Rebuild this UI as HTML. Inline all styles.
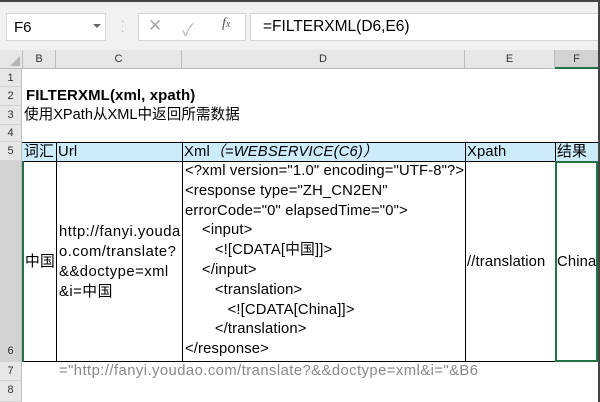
<!DOCTYPE html>
<html><head><meta charset="utf-8"><style>
*{margin:0;padding:0;box-sizing:border-box}
body{width:600px;height:402px;overflow:hidden;background:#fff;position:relative;font-family:"Liberation Sans","Noto Sans CJK SC",sans-serif;color:#000}
.a{position:absolute;white-space:nowrap}
.hd{background:#e6e6e6;color:#333;font-size:11px;text-align:center}
.rh{position:absolute;left:0;width:22px;background:#e6e6e6;color:#333;font-size:11px;text-align:center;border-bottom:1px solid #d4d4d4;border-right:1px solid #bdbdbd}
.t{font-size:14.8px;letter-spacing:0.15px;line-height:20px}
</style></head><body>
<div class="a" style="left:0;top:0;width:600px;height:50px;background:#f0f0f0;border-top:2px solid #444"></div>
<div class="a" style="left:6px;top:13px;width:100px;height:28px;background:#fff;border:1px solid #d6d6d6;font-size:15px;padding:5px 0 0 7px">F6</div>
<div class="a" style="left:93px;top:24px;width:0;height:0;border-left:4px solid transparent;border-right:4px solid transparent;border-top:4px solid #666"></div>
<div class="a" style="left:121px;top:19px;color:#aaa;font-size:10px;line-height:5px">·<br>·<br>·</div>
<div class="a" style="left:138px;top:13px;width:108px;height:28px;background:#fff;border:1px solid #d6d6d6"></div>
<div class="a" style="left:148px;top:16px;color:#aaa;font-size:17px">✕</div>
<div class="a" style="left:182px;top:16px;color:#bbb;font-size:17px">✓</div>
<div class="a" style="left:222px;top:16px;color:#555;font-size:14px;font-style:italic;font-family:'Liberation Serif',serif">f<span style="font-size:10px">x</span></div>
<div class="a" style="left:250px;top:13px;width:352px;height:28px;background:#fff;border:1px solid #d6d6d6;font-size:15.5px;padding:4px 0 0 12px">=FILTERXML(D6,E6)</div>
<div class="a hd" style="left:0;top:50px;width:600px;height:19px;border-bottom:1px solid #bdbdbd"></div>
<div class="a" style="left:10px;top:56px;width:0;height:0;border-left:10px solid transparent;border-bottom:10px solid #b5b5b5"></div>
<div class="a hd" style="left:22px;top:50px;width:34px;height:18px;line-height:18px;border-left:1px solid #bdbdbd;border-right:1px solid #bdbdbd">B</div>
<div class="a hd" style="left:56px;top:50px;width:126px;height:18px;line-height:18px;border-right:1px solid #bdbdbd">C</div>
<div class="a hd" style="left:182px;top:50px;width:283px;height:18px;line-height:18px;border-right:1px solid #bdbdbd">D</div>
<div class="a hd" style="left:465px;top:50px;width:90px;height:18px;line-height:18px;border-right:1px solid #bdbdbd">E</div>
<div class="a hd" style="left:555px;top:50px;width:43px;height:19px;line-height:18px;background:#d2d2d2;border-bottom:2px solid #217346">F</div>
<div class="a" style="left:598px;top:0;width:2px;height:402px;background:#444"></div>
<div class="rh" style="top:69px;height:18px;line-height:18px">1</div>
<div class="rh" style="top:87px;height:19px;line-height:19px">2</div>
<div class="rh" style="top:106px;height:19px;line-height:19px">3</div>
<div class="rh" style="top:125px;height:17px;line-height:17px">4</div>
<div class="rh" style="top:142px;height:19px;line-height:19px">5</div>
<div class="rh" style="top:161px;height:201px;background:#d2d2d2;padding-top:184px">6</div>
<div class="rh" style="top:362px;height:19px;line-height:19px">7</div>
<div class="rh" style="top:381px;height:21px;line-height:19px">8</div>
<div class="a" style="left:26px;top:86px;font-size:15px;line-height:20px;font-weight:bold;letter-spacing:0.1px">FILTERXML(xml, xpath)</div>
<div class="a" style="left:24px;top:105px;font-size:14.6px;line-height:20px">使用XPath从XML中返回所需数据</div>
<div class="a" style="left:22px;top:142px;width:576px;height:20px;background:#ccecfb;border-top:1px solid #000;border-bottom:1px solid #000"></div>
<div class="a" style="left:22px;top:142px;width:576px;height:220px;border-bottom:1px solid #000"></div>
<div class="a" style="left:56px;top:142px;width:1px;height:220px;background:#000"></div>
<div class="a" style="left:182px;top:142px;width:1px;height:220px;background:#000"></div>
<div class="a" style="left:465px;top:142px;width:1px;height:220px;background:#000"></div>
<div class="a" style="left:555px;top:142px;width:1px;height:220px;background:#000"></div>
<div class="a" style="left:22px;top:161px;width:35px;height:201px;border-left:2px solid #217346"></div>
<div class="a" style="left:555px;top:161px;width:43px;height:201px;border:2px solid #217346"></div>
<div class="a t" style="left:24px;top:142px">词汇</div>
<div class="a t" style="left:58px;top:142px">Url</div>
<div class="a t" style="left:184px;top:142px">Xml<i>（=WEBSERVICE(C6)）</i></div>
<div class="a t" style="left:467px;top:142px">Xpath</div>
<div class="a t" style="left:557px;top:142px">结果</div>
<div class="a t" style="left:25px;top:252px">中国</div>
<div class="a t" style="left:59px;top:222px;letter-spacing:0.5px">http://fanyi.youda<br>o.com/translate?<br>&amp;&amp;doctype=xml<br>&amp;i=中国</div>
<div class="a t" style="left:185px;top:162px;line-height:19.8px;white-space:pre">&lt;?xml version="1.0" encoding="UTF-8"?&gt;
&lt;response type="ZH_CN2EN"
errorCode="0" elapsedTime="0"&gt;
    &lt;input&gt;
       &lt;![CDATA[中国]]&gt;
    &lt;/input&gt;
       &lt;translation&gt;
          &lt;![CDATA[China]]&gt;
       &lt;/translation&gt;
&lt;/response&gt;</div>
<div class="a t" style="left:467px;top:252px">//translation</div>
<div class="a t" style="left:557px;top:252px">China</div>
<div class="a t" style="left:59px;top:361px;color:#888;letter-spacing:0.45px">="http://fanyi.youdao.com/translate?&amp;&amp;doctype=xml&amp;i="&amp;B6</div>
</body></html>
